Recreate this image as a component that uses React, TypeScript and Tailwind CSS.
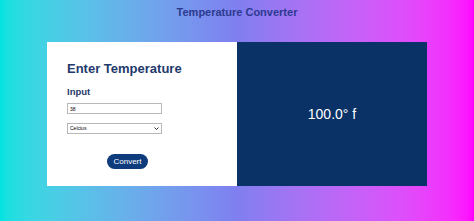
import React, { useState } from 'react';

export default function App() {
  const [value, setValue] = useState('38');
  const [unit, setUnit] = useState('Celcius');
  const [result, setResult] = useState('100.0° f');

  const handleConvert = () => {
    const n = parseFloat(value);
    if (isNaN(n)) return;
    if (unit === 'Celcius') setResult(`${(n * 9 / 5 + 32).toFixed(1)}° f`);
    else setResult(`${((n - 32) * 5 / 9).toFixed(1)}° c`);
  };

  return (
    <div
      className="min-h-[221px] w-full bg-gradient-to-r from-[#00e3e0] via-[#7f7ff0] to-[#ff00ff]"
      style={{ fontFamily: '"Liberation Sans", Arial, sans-serif' }}
    >
      <h1 className="pt-[5px] text-center text-[11px] font-bold leading-[14px] text-[#2c3a8e]">
        Temperature Converter
      </h1>

      <div className="mx-auto mt-[23px] flex h-[144px] w-[380px]">
        {/* Input side */}
        <div className="flex w-[190px] flex-col items-start bg-white pl-[20px] pt-[19px]">
          <h2 className="text-[13px] font-bold leading-[15px] text-[#1f3a6c]">Enter Temperature</h2>
          <h3 className="mt-[10px] text-[9.5px] font-bold leading-[12px] text-[#1f3a6c]">Input</h3>
          <input
            type="text"
            value={value}
            onChange={(e) => setValue(e.target.value)}
            className="mt-[5px] block h-[11px] w-[95px] border border-[#b8b8b8] px-[2px] text-[5px] leading-[9px] text-black outline-none"
          />
          <div className="relative mt-[9px] h-[11px] w-[95px]">
            <select
              value={unit}
              onChange={(e) => setUnit(e.target.value)}
              className="block h-[11px] w-full appearance-none border border-[#b8b8b8] bg-white px-[2px] py-0 text-[5px] leading-[9px] text-black outline-none"
            >
              <option>Celcius</option>
              <option>Fahrenheit</option>
            </select>
            <svg className="pointer-events-none absolute right-[3px] top-[4px] h-[3px] w-[5px]" viewBox="0 0 5 3" fill="none">
              <path d="M0.5 0.5L2.5 2.5L4.5 0.5" stroke="#333" strokeWidth={1} />
            </svg>
          </div>
          <button
            onClick={handleConvert}
            className="ml-[40px] mt-[20px] block h-[15px] w-[41px] rounded-full bg-[#0d3b7c] text-[8px] leading-[15px] text-white"
          >
            Convert
          </button>
        </div>

        {/* Result side */}
        <div className="flex w-[190px] items-center justify-center bg-[#0a3266]">
          <span className="text-[14px] leading-[16px] text-white">{result}</span>
        </div>
      </div>
    </div>
  );
}
